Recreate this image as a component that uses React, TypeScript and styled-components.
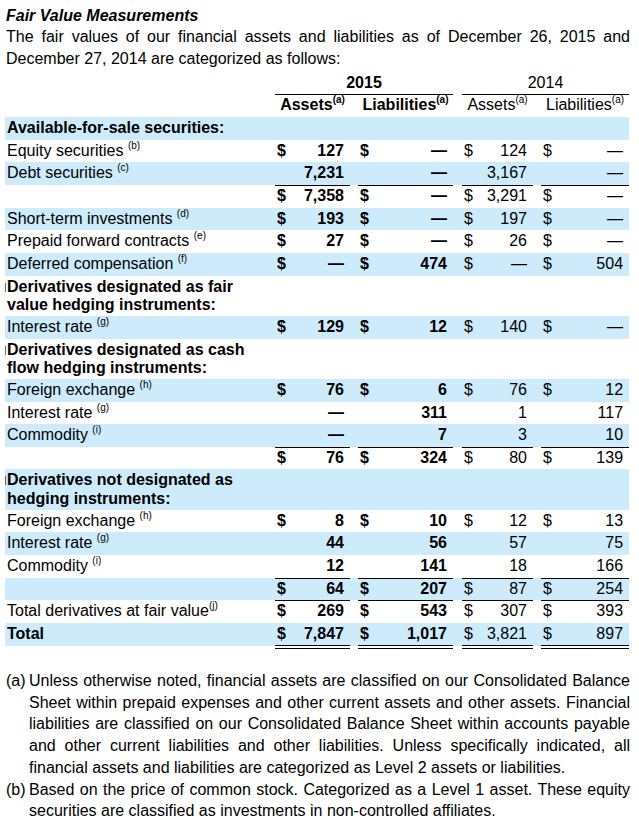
import React from "react";
import styled, { createGlobalStyle } from "styled-components";

const GlobalStyle = createGlobalStyle`
  html, body { margin: 0; padding: 0; background: #ffffff; }
  body {
    font-family: "Liberation Sans", Arial, Helvetica, sans-serif;
    color: #000000;
    font-size: 16px;
  }
`;

const SHADE = "#cdebfb";
const ROW_H = 22.65;

const Page = styled.div`
  width: 624px;
  padding: 4.5px 0 0 6px;
`;

const Title = styled.h1`
  margin: 0;
  font-size: 16px;
  font-weight: 700;
  font-style: italic;
  line-height: 21.5px;
`;

const Intro = styled.div`
  line-height: 21.5px;
`;

const JustLine = styled.div<{ $last?: boolean }>`
  text-align: justify;
  text-align-last: ${(p) => (p.$last ? "left" : "justify")};
`;

const Table = styled.table`
  border-collapse: separate;
  border-spacing: 0;
  table-layout: fixed;
  width: 624px;
  margin-left: -1px;
  font-size: 16px;
`;

const Col = styled.col<{ $w: number }>`
  width: ${(p) => p.$w}px;
`;

const YearCell = styled.td<{ $bold?: boolean }>`
  padding: 4.5px 0 2.5px;
  line-height: 18px;
  text-align: center;
  font-weight: ${(p) => (p.$bold ? 700 : 400)};
  border-bottom: 1px solid #000;
`;

const Blank = styled.td`
  padding: 0;
`;

const HeadCell = styled.td<{ $bold?: boolean }>`
  padding: 0.5px 0 3.5px;
  line-height: 18px;
  text-align: center;
  white-space: nowrap;
  font-weight: ${(p) => (p.$bold ? 700 : 400)};
`;

const Row = styled.tr<{ $shade: boolean }>`
  background: ${(p) => (p.$shade ? SHADE : "transparent")};
`;

const LabelCell = styled.td<{ $bold?: boolean }>`
  padding: 0 0 0 2px;
  line-height: ${ROW_H}px;
  height: ${ROW_H}px;
  vertical-align: top;
  white-space: nowrap;
  font-weight: ${(p) => (p.$bold ? 700 : 400)};
`;

const SectionCell = styled.td`
  position: relative;
  padding: 2px 0 1.3px 2px;
  line-height: 18.5px;
  vertical-align: top;
  font-weight: 700;
  white-space: nowrap;
  &::before {
    content: "";
    position: absolute;
    left: 0;
    top: 7px;
    width: 1px;
    height: 9px;
    background: #666;
  }
`;

const ValueCell = styled.td<{ $rule?: "top" | "double" }>`
  padding: 0;
  line-height: ${ROW_H}px;
  vertical-align: top;
  box-shadow: ${(p) =>
    p.$rule === "top"
      ? "inset 0 1px 0 #000"
      : p.$rule === "double"
      ? "inset 0 -1px 0 #000, 0 2px 0 #fff, 0 3px 0 #000"
      : "none"};
`;

const Money = styled.div<{ $bold?: boolean }>`
  display: flex;
  justify-content: space-between;
  padding: 0 6px 0 2px;
  white-space: nowrap;
  font-weight: ${(p) => (p.$bold ? 700 : 400)};
`;

const Sup = styled.sup`
  font-size: 10px;
  line-height: 0;
  vertical-align: 0;
  position: relative;
  top: -7px;
`;

const Notes = styled.div`
  margin-top: 24px;
  font-family: "Liberation Sans", Arial, sans-serif;
  font-size: 16px;
  line-height: 21.8px;
`;

const Note = styled.div`
  display: grid;
  grid-template-columns: 23px 1fr;
`;

const NoteMark = styled.div``;
const NoteBody = styled.div``;

type Val = { v: string; cur?: boolean };
type Item = {
  label?: string;
  note?: string;
  noteTight?: boolean;
  section?: [string, string];
  bold?: boolean;
  cells?: [Val, Val, Val, Val];
  rule?: "top" | "double";
};

const D = "\u2014";

const rows: Item[] = [
  { label: "Available-for-sale securities:", bold: true },
  {
    label: "Equity securities",
    note: "(b)",
    cells: [
      { v: "127", cur: true },
      { v: D, cur: true },
      { v: "124", cur: true },
      { v: D, cur: true },
    ],
  },
  {
    label: "Debt securities",
    note: "(c)",
    cells: [{ v: "7,231" }, { v: D }, { v: "3,167" }, { v: D }],
  },
  {
    cells: [
      { v: "7,358", cur: true },
      { v: D, cur: true },
      { v: "3,291", cur: true },
      { v: D, cur: true },
    ],
    rule: "top",
  },
  {
    label: "Short-term investments",
    note: "(d)",
    cells: [
      { v: "193", cur: true },
      { v: D, cur: true },
      { v: "197", cur: true },
      { v: D, cur: true },
    ],
  },
  {
    label: "Prepaid forward contracts",
    note: "(e)",
    cells: [
      { v: "27", cur: true },
      { v: D, cur: true },
      { v: "26", cur: true },
      { v: D, cur: true },
    ],
  },
  {
    label: "Deferred compensation",
    note: "(f)",
    cells: [
      { v: D, cur: true },
      { v: "474", cur: true },
      { v: D, cur: true },
      { v: "504", cur: true },
    ],
  },
  { section: ["Derivatives designated as fair", "value hedging instruments:"] },
  {
    label: "Interest rate",
    note: "(g)",
    cells: [
      { v: "129", cur: true },
      { v: "12", cur: true },
      { v: "140", cur: true },
      { v: D, cur: true },
    ],
  },
  { section: ["Derivatives designated as cash", "flow hedging instruments:"] },
  {
    label: "Foreign exchange",
    note: "(h)",
    cells: [
      { v: "76", cur: true },
      { v: "6", cur: true },
      { v: "76", cur: true },
      { v: "12", cur: true },
    ],
  },
  {
    label: "Interest rate",
    note: "(g)",
    cells: [{ v: D }, { v: "311" }, { v: "1" }, { v: "117" }],
  },
  {
    label: "Commodity",
    note: "(i)",
    cells: [{ v: D }, { v: "7" }, { v: "3" }, { v: "10" }],
  },
  {
    cells: [
      { v: "76", cur: true },
      { v: "324", cur: true },
      { v: "80", cur: true },
      { v: "139", cur: true },
    ],
    rule: "top",
  },
  { section: ["Derivatives not designated as", "hedging instruments:"] },
  {
    label: "Foreign exchange",
    note: "(h)",
    cells: [
      { v: "8", cur: true },
      { v: "10", cur: true },
      { v: "12", cur: true },
      { v: "13", cur: true },
    ],
  },
  {
    label: "Interest rate",
    note: "(g)",
    cells: [{ v: "44" }, { v: "56" }, { v: "57" }, { v: "75" }],
  },
  {
    label: "Commodity",
    note: "(i)",
    cells: [{ v: "12" }, { v: "141" }, { v: "18" }, { v: "166" }],
  },
  {
    cells: [
      { v: "64", cur: true },
      { v: "207", cur: true },
      { v: "87", cur: true },
      { v: "254", cur: true },
    ],
    rule: "top",
  },
  {
    label: "Total derivatives at fair value",
    note: "(j)",
    noteTight: true,
    cells: [
      { v: "269", cur: true },
      { v: "543", cur: true },
      { v: "307", cur: true },
      { v: "393", cur: true },
    ],
    rule: "top",
  },
  {
    label: "Total",
    bold: true,
    cells: [
      { v: "7,847", cur: true },
      { v: "1,017", cur: true },
      { v: "3,821", cur: true },
      { v: "897", cur: true },
    ],
    rule: "double",
  },
];

const ValuePair: React.FC<{ val?: Val; bold: boolean; rule?: "top" | "double" }> = ({
  val,
  bold,
  rule,
}) => (
  <ValueCell $rule={rule}>
    {val ? (
      <Money $bold={bold}>
        <span>{val.cur ? "$" : ""}</span>
        <span>{val.v}</span>
      </Money>
    ) : null}
  </ValueCell>
);

const BodyRow: React.FC<{ item: Item; shade: boolean }> = ({ item, shade }) => {
  const c = item.cells;
  return (
    <Row $shade={shade}>
      {item.section ? (
        <SectionCell>
          {item.section[0]}
          <br />
          {item.section[1]}
        </SectionCell>
      ) : (
        <LabelCell $bold={item.bold}>
          {item.label}
          {item.note ? (
            <>
              {item.noteTight ? "" : " "}
              <Sup>{item.note}</Sup>
            </>
          ) : null}
        </LabelCell>
      )}
      <ValuePair val={c?.[0]} bold rule={item.rule} />
      <Blank />
      <ValuePair val={c?.[1]} bold rule={item.rule} />
      <Blank />
      <ValuePair val={c?.[2]} bold={false} rule={item.rule} />
      <Blank />
      <ValuePair val={c?.[3]} bold={false} rule={item.rule} />
    </Row>
  );
};

export default function App() {
  return (
    <>
      <GlobalStyle />
      <Page>
        <Title>Fair Value Measurements</Title>
        <Intro>
          <JustLine>
            The fair values of our financial assets and liabilities as of December 26, 2015 and
          </JustLine>
          <JustLine $last>December 27, 2014 are categorized as follows:</JustLine>
        </Intro>
        <Table>
          <colgroup>
            <Col $w={270} />
            <Col $w={75} />
            <Col $w={8} />
            <Col $w={95} />
            <Col $w={9} />
            <Col $w={71} />
            <Col $w={8} />
            <Col $w={88} />
          </colgroup>
          <tbody>
            <tr>
              <Blank />
              <YearCell colSpan={3} $bold>
                2015
              </YearCell>
              <Blank />
              <YearCell colSpan={3}>2014</YearCell>
            </tr>
            <tr>
              <Blank />
              <HeadCell $bold>
                Assets<Sup>(a)</Sup>
              </HeadCell>
              <Blank />
              <HeadCell $bold>
                Liabilities<Sup>(a)</Sup>
              </HeadCell>
              <Blank />
              <HeadCell>
                Assets<Sup>(a)</Sup>
              </HeadCell>
              <Blank />
              <HeadCell>
                Liabilities<Sup>(a)</Sup>
              </HeadCell>
            </tr>
            {rows.map((r, i) => (
              <BodyRow key={i} item={r} shade={i % 2 === 0} />
            ))}
          </tbody>
        </Table>
        <Notes>
          <Note>
            <NoteMark>(a)</NoteMark>
            <NoteBody>
              <JustLine>
                Unless otherwise noted, financial assets are classified on our Consolidated Balance
              </JustLine>
              <JustLine>
                Sheet within prepaid expenses and other current assets and other assets. Financial
              </JustLine>
              <JustLine>
                liabilities are classified on our Consolidated Balance Sheet within accounts payable
              </JustLine>
              <JustLine>
                and other current liabilities and other liabilities. Unless specifically indicated, all
              </JustLine>
              <JustLine $last>
                financial assets and liabilities are categorized as Level 2 assets or liabilities.
              </JustLine>
            </NoteBody>
          </Note>
          <Note>
            <NoteMark>(b)</NoteMark>
            <NoteBody>
              <JustLine>
                Based on the price of common stock. Categorized as a Level 1 asset. These equity
              </JustLine>
              <JustLine $last>
                securities are classified as investments in non-controlled affiliates.
              </JustLine>
            </NoteBody>
          </Note>
        </Notes>
      </Page>
    </>
  );
}
